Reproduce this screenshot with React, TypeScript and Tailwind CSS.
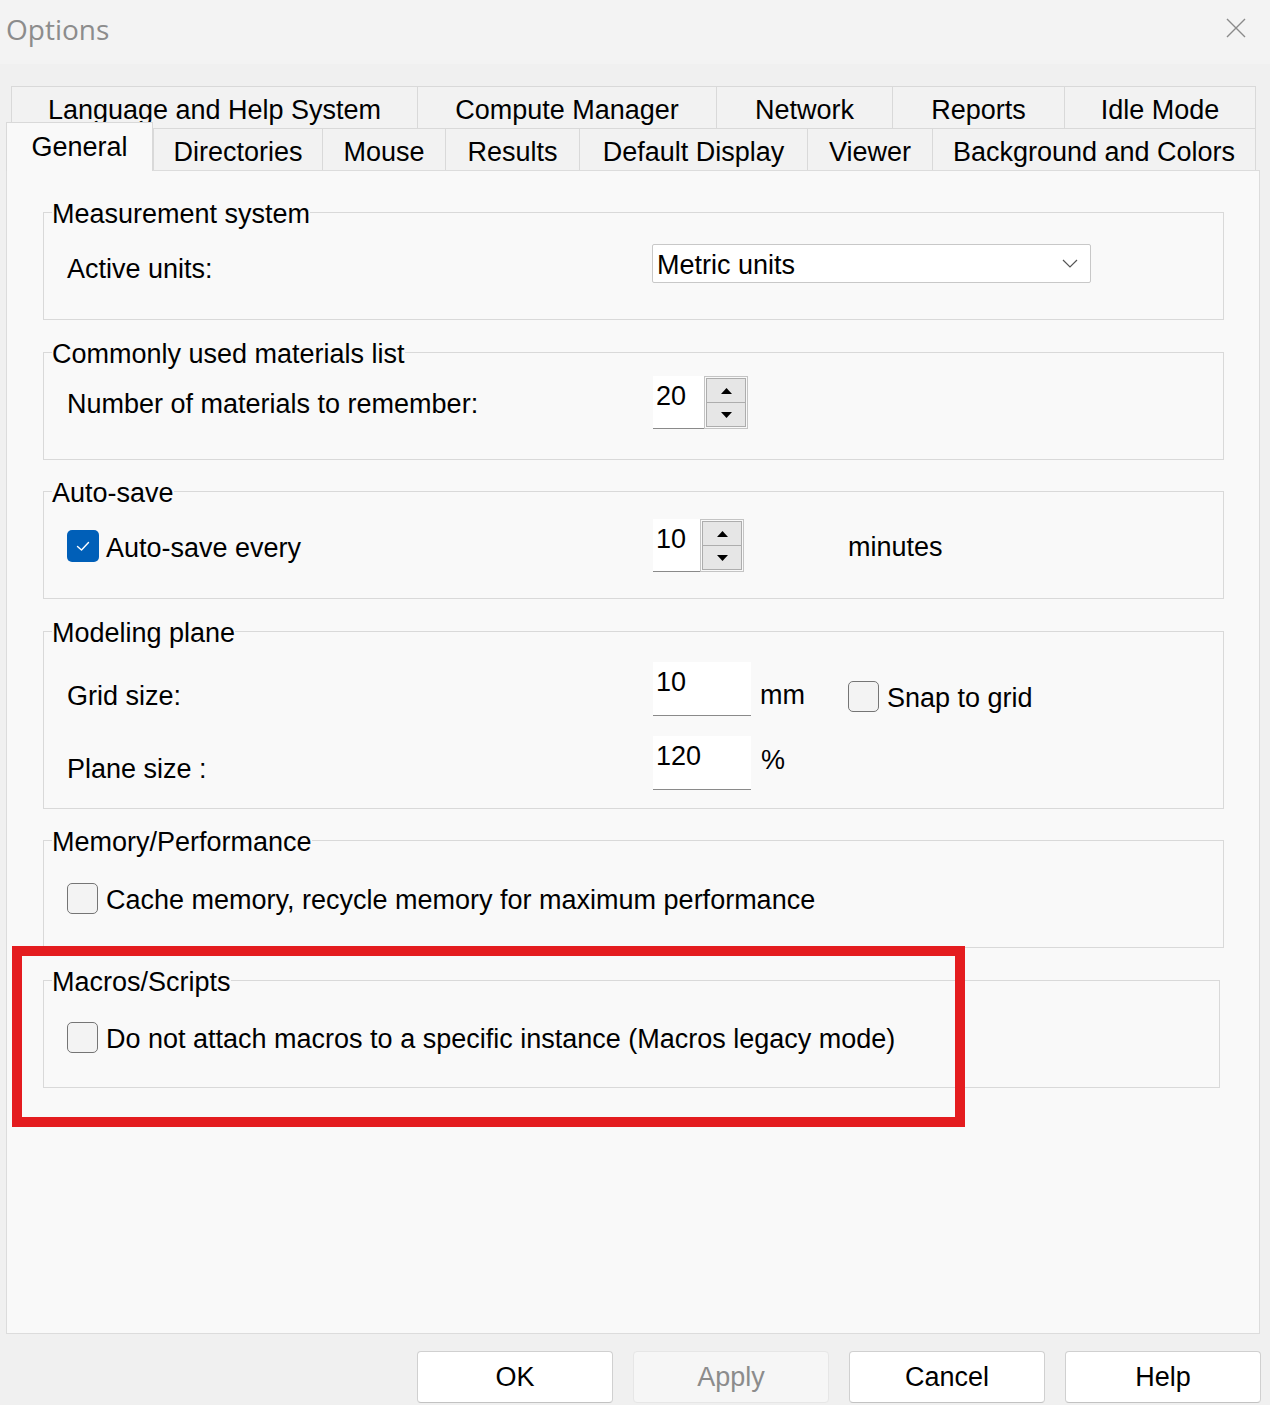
import React from "react";

function Tab({ label, w, active, last }: { label: string; w: string; active?: boolean; last?: boolean }) {
  if (active) {
    return (
      <div
        className={`relative z-10 -mb-px flex h-[49px] shrink-0 justify-center border border-b-0 border-[#d9d9d9] bg-[#f9f9f9] pt-[9px] leading-[30px] ${w}`}
      >
        {label}
      </div>
    );
  }
  return (
    <div
      className={`flex h-[42px] shrink-0 justify-center border-t border-l border-[#d9d9d9] bg-[#f2f2f2] pt-[8px] leading-[30px] ${last ? "border-r" : ""} ${w}`}
    >
      {label}
    </div>
  );
}

function Group({ title, w = "w-[1181px]", mt = "", children }: { title: string; w?: string; mt?: string; children: React.ReactNode }) {
  return (
    <fieldset className={`ml-[36px] border border-[#d9d9d9] ${w} ${mt}`}>
      <legend className="ml-[8px] pt-[3px] leading-[30px]">{title}</legend>
      {children}
    </fieldset>
  );
}

function Checkbox({ checked }: { checked?: boolean }) {
  if (checked) {
    return (
      <div className="flex h-[32px] w-[32px] shrink-0 items-center justify-center rounded-[5px] bg-[#005fb8]">
        <svg width="18" height="18" viewBox="0 0 18 18" fill="none">
          <path d="M3.5 9.5 L7.5 13 L14.5 5.5" stroke="#fff" strokeWidth="1.4" strokeLinecap="round" strokeLinejoin="round" />
        </svg>
      </div>
    );
  }
  return <div className="h-[31px] w-[31px] shrink-0 rounded-[5px] border border-[#757575] bg-[#f3f3f3]" />;
}

function Arrow({ up }: { up?: boolean }) {
  return (
    <svg width="11" height="6" viewBox="0 0 11 6">
      {up ? <path d="M0 6 L5.5 0 L11 6 Z" fill="#000" /> : <path d="M0 0 L5.5 6 L11 0 Z" fill="#000" />}
    </svg>
  );
}

function Spinner({ value, fieldW, btnW }: { value: string; fieldW: string; btnW: string }) {
  return (
    <div className="flex h-[53px] shrink-0">
      <div className={`h-full border-b border-[#8a8a8a] bg-white pl-[3px] pt-[5px] leading-[30px] ${fieldW}`}>{value}</div>
      <div className={`flex h-full flex-col border border-[#c4c4c4] p-px ${btnW}`}>
        <div className="flex flex-1 items-center justify-center border border-[#adadad] bg-[#e6e6e6]">
          <Arrow up />
        </div>
        <div className="flex flex-1 items-center justify-center border border-t-0 border-[#adadad] bg-[#e6e6e6]">
          <Arrow />
        </div>
      </div>
    </div>
  );
}

function TextInput({ value }: { value: string }) {
  return (
    <div className="h-[54px] w-[98px] shrink-0 border-b border-[#8a8a8a] bg-white pl-[3px] pt-[5px] leading-[30px]">
      {value}
    </div>
  );
}

function Btn({ label, disabled }: { label: string; disabled?: boolean }) {
  return (
    <div
      className={`flex h-[52px] w-[196px] items-center justify-center rounded-[4px] border leading-[30px] ${
        disabled ? "border-[#e6e6e6] bg-[#f6f6f6] text-[#8c8c8c]" : "border-[#d0d0d0] border-b-[#c2c2c2] bg-white text-black"
      }`}
    >
      {label}
    </div>
  );
}

export default function App() {
  return (
    <div className="relative h-[1405px] w-[1270px] overflow-hidden bg-[#f0f0f0] font-['Liberation_Sans',Arial,sans-serif] text-[27px] text-black">
      {/* Title bar */}
      <div className="flex h-[64px] items-start justify-between bg-[#f3f3f3]">
        <div className="pl-[6px] pt-[12px] font-['Open_Sans',sans-serif] text-[28px] leading-[34px] text-[#8c8c8c]">Options</div>
        <svg className="mr-[24px] mt-[18px]" width="20" height="20" viewBox="0 0 20 20">
          <path d="M1 1 L19 19 M19 1 L1 19" stroke="#8a8a8a" strokeWidth="1.4" />
        </svg>
      </div>

      {/* Tabs */}
      <div className="ml-[11px] mt-[22px] flex">
        <Tab label="Language and Help System" w="w-[406px]" />
        <Tab label="Compute Manager" w="w-[299px]" />
        <Tab label="Network" w="w-[176px]" />
        <Tab label="Reports" w="w-[172px]" />
        <Tab label="Idle Mode" w="w-[192px]" last />
      </div>
      <div className="-mt-[6px] ml-[6px] flex h-[48px] items-end">
        <Tab label="General" w="w-[147px]" active />
        <Tab label="Directories" w="w-[169px]" />
        <Tab label="Mouse" w="w-[123px]" />
        <Tab label="Results" w="w-[134px]" />
        <Tab label="Default Display" w="w-[228px]" />
        <Tab label="Viewer" w="w-[125px]" />
        <Tab label="Background and Colors" w="w-[324px]" last />
      </div>

      {/* Panel */}
      <div className="ml-[6px] flex h-[1164px] w-[1254px] flex-col border border-[#dcdcdc] bg-[#f9f9f9] pt-[25px]">
        <Group title="Measurement system">
          <div className="flex h-[90px] items-start pl-[23px]">
            <span className="mt-[25px] w-[585px] leading-[30px]">Active units:</span>
            <div className="mt-[15px] flex h-[39px] w-[439px] items-start justify-between rounded-[2px] border border-[#c8c8c8] bg-white pl-[4px] pt-[5px] leading-[30px]">
              <span>Metric units</span>
              <svg className="mr-[12px] mt-[9px]" width="16" height="9" viewBox="0 0 16 9" fill="none">
                <path d="M1 1 L8 8 L15 1" stroke="#555" strokeWidth="1.2" />
              </svg>
            </div>
          </div>
        </Group>

        <Group title="Commonly used materials list" mt="mt-[16px]">
          <div className="flex h-[90px] items-start pl-[23px]">
            <span className="mt-[20px] w-[586px] leading-[30px]">Number of materials to remember:</span>
            <div className="mt-[7px]">
              <Spinner value="20" fieldW="w-[51px]" btnW="w-[44px]" />
            </div>
          </div>
        </Group>

        <Group title="Auto-save" mt="mt-[15px]">
          <div className="flex h-[90px] items-start pl-[23px]">
            <div className="flex w-[586px] items-start">
              <div className="mt-[22px]">
                <Checkbox checked />
              </div>
              <span className="ml-[7px] mt-[25px] leading-[30px]">Auto-save every</span>
            </div>
            <div className="mt-[11px]">
              <Spinner value="10" fieldW="w-[47px]" btnW="w-[44px]" />
            </div>
            <span className="ml-[104px] mt-[24px] leading-[30px]">minutes</span>
          </div>
        </Group>

        <Group title="Modeling plane" mt="mt-[16px]">
          <div className="flex h-[160px] flex-col pl-[23px]">
            <div className="flex h-[74px] items-start">
              <span className="mt-[33px] w-[586px] leading-[30px]">Grid size:</span>
              <div className="mt-[14px]">
                <TextInput value="10" />
              </div>
              <span className="ml-[9px] mt-[32px] leading-[30px]">mm</span>
              <div className="ml-[43px] mt-[33px]">
                <Checkbox />
              </div>
              <span className="ml-[8px] mt-[35px] leading-[30px]">Snap to grid</span>
            </div>
            <div className="flex h-[86px] items-start">
              <span className="mt-[32px] w-[586px] leading-[30px]">Plane size :</span>
              <div className="mt-[14px]">
                <TextInput value="120" />
              </div>
              <span className="ml-[10px] mt-[23px] leading-[30px]">%</span>
            </div>
          </div>
        </Group>

        <Group title="Memory/Performance" mt="mt-[15px]">
          <div className="flex h-[90px] items-start pl-[23px]">
            <div className="mt-[26px]">
              <Checkbox />
            </div>
            <span className="ml-[8px] mt-[28px] leading-[30px]">Cache memory, recycle memory for maximum performance</span>
          </div>
        </Group>

        <Group title="Macros/Scripts" w="w-[1177px]" mt="mt-[16px]">
          <div className="flex h-[90px] items-start pl-[23px]">
            <div className="mt-[25px]">
              <Checkbox />
            </div>
            <span className="ml-[8px] mt-[27px] leading-[30px]">Do not attach macros to a specific instance (Macros legacy mode)</span>
          </div>
        </Group>
      </div>

      {/* Buttons */}
      <div className="mr-[9px] mt-[17px] flex justify-end gap-[20px]">
        <Btn label="OK" />
        <Btn label="Apply" disabled />
        <Btn label="Cancel" />
        <Btn label="Help" />
      </div>

      {/* Highlight annotation */}
      <div className="absolute left-[12px] top-[946px] h-[181px] w-[953px] border-[10px] border-[#e41c1f]" />
    </div>
  );
}
